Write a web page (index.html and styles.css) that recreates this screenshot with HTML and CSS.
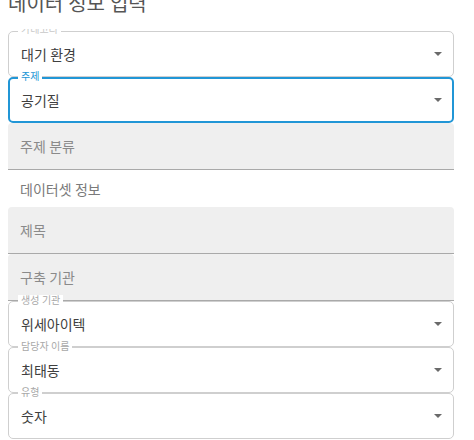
FILE: index.html
```html
<!DOCTYPE html>
<html lang="ko">
<head>
<meta charset="utf-8">
<link rel="stylesheet" href="styles.css">
</head>
<body>
<div class="page">
  <h1 class="title">데이터 정보 입력</h1>

  <div class="field outlined">
    <span class="label clipped">카테고리</span>
    <span class="value">대기 환경</span>
    <svg class="arrow" viewBox="0 0 10 5"><path d="M0 0l5 5 5-5z"/></svg>
  </div>

  <div class="field outlined focused">
    <span class="label">주제</span>
    <span class="value">공기질</span>
    <svg class="arrow" viewBox="0 0 10 5"><path d="M0 0l5 5 5-5z"/></svg>
  </div>

  <div class="field filled">
    <span class="placeholder">주제 분류</span>
  </div>

  <div class="section">데이터셋 정보</div>

  <div class="field filled">
    <span class="placeholder">제목</span>
  </div>

  <div class="field filled">
    <span class="placeholder">구축 기관</span>
  </div>

  <div class="field outlined">
    <span class="label">생성 기관</span>
    <span class="value">위세아이텍</span>
    <svg class="arrow" viewBox="0 0 10 5"><path d="M0 0l5 5 5-5z"/></svg>
  </div>

  <div class="field outlined">
    <span class="label">담당자 이름</span>
    <span class="value">최태동</span>
    <svg class="arrow" viewBox="0 0 10 5"><path d="M0 0l5 5 5-5z"/></svg>
  </div>

  <div class="field outlined">
    <span class="label">유형</span>
    <span class="value">숫자</span>
    <svg class="arrow" viewBox="0 0 10 5"><path d="M0 0l5 5 5-5z"/></svg>
  </div>
</div>
</body>
</html>
```

FILE: styles.css
```css
* { box-sizing: border-box; }
html, body { margin: 0; padding: 0; background: #fff; }
body {
  font-family: Roboto, "Noto Sans CJK KR", sans-serif;
  color: #333;
  overflow: hidden;
}
.page {
  width: 474px;
  padding: 0 20px 0 8px;
  display: flex;
  flex-direction: column;
  margin-top: -9px;
}
.title {
  margin: 0;
  font-size: 20px;
  font-weight: 400;
  line-height: 26px;
  color: #555;
  height: 40px;
}
.field {
  position: relative;
  display: flex;
  align-items: center;
  width: 446px;
}
.outlined {
  height: 46px;
  border: 1px solid #cfcfcf;
  border-radius: 5px;
  padding: 0 12px;
}
.outlined.focused {
  border: 2px solid #2196d6;
  padding: 0 11px;
}
.label {
  position: absolute;
  top: -7px;
  left: 9px;
  padding: 0 3px;
  background: #fff;
  font-size: 10px;
  line-height: 12px;
  color: #a8a8a8;
}
.focused .label {
  top: -8px;
  left: 8px;
  color: #2196d6;
}
.label.clipped {
  color: #c8c8c8;
  height: 6px;
  top: -3px;
  line-height: 2px;
  overflow: hidden;
}
.value {
  font-size: 14px;
  color: #404040;
  flex: 1;
}
.arrow {
  width: 8px;
  height: 4px;
  fill: #6a6a6a;
  margin-right: -1px;
}
.filled {
  height: 47px;
  background: #efefef;
  border-radius: 4px 4px 0 0;
  border-bottom: 1px solid #a9a9a9;
  padding: 0 12px;
}
.placeholder {
  font-size: 14px;
  color: #8a8a8a;
}
.section {
  height: 37px;
  display: flex;
  align-items: center;
  padding-left: 12px;
  font-size: 14px;
  color: #7a7a7a;
}
```
